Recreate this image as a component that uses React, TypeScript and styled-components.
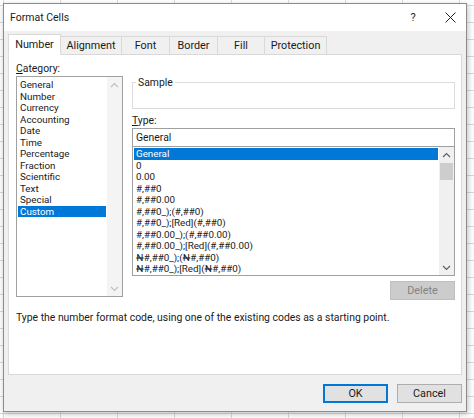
import styled, { createGlobalStyle } from 'styled-components';

const GlobalStyle = createGlobalStyle`
  html, body {
    margin: 0;
    padding: 0;
  }
  body {
    width: 474px;
    height: 418px;
    overflow: hidden;
    font-family: Roboto, "Noto Sans", sans-serif;
    font-size: 10.4px;
    color: #000;
    background-color: #fff;
    background-image:
      linear-gradient(to right, #dadada 1px, transparent 1px),
      linear-gradient(to bottom, #dadada 1px, transparent 1px);
    background-size: 57px 17px;
    background-position: 3px 5px;
  }
`;

const categories = [
  'General',
  'Number',
  'Currency',
  'Accounting',
  'Date',
  'Time',
  'Percentage',
  'Fraction',
  'Scientific',
  'Text',
  'Special',
  'Custom',
];

const formats = [
  'General',
  '0',
  '0.00',
  '#,##0',
  '#,##0.00',
  '#,##0_);(#,##0)',
  '#,##0_);[Red](#,##0)',
  '#,##0.00_);(#,##0.00)',
  '#,##0.00_);[Red](#,##0.00)',
  '\u20A6#,##0_);(\u20A6#,##0)',
  '\u20A6#,##0_);[Red](\u20A6#,##0)',
];

const tabs = ['Number', 'Alignment', 'Font', 'Border', 'Fill', 'Protection'];
const tabWidths = [53, 61, 48, 48, 47, 62];

function Chevron({ up }: { up?: boolean }) {
  return (
    <svg width="9" height="6" viewBox="0 0 9 6">
      <path
        d={up ? 'M1 5 L4.5 1.5 L8 5' : 'M1 1 L4.5 4.5 L8 1'}
        fill="none"
        stroke="currentColor"
        strokeWidth="1.2"
      />
    </svg>
  );
}

export default function App() {
  return (
    <>
      <GlobalStyle />
      <Page>
        <Dialog>
          <TitleBar>
            <Title>Format Cells</Title>
            <TitleButton $w={42}>?</TitleButton>
            <TitleButton $w={32}>
              <svg width="11" height="11" viewBox="0 0 11 11">
                <path d="M0.5 0.5 L10.5 10.5 M10.5 0.5 L0.5 10.5" stroke="#222" strokeWidth="1" />
              </svg>
            </TitleButton>
          </TitleBar>
          <Body>
            <TabRow>
              {tabs.map((t, i) => (
                <Tab key={t} $active={i === 0} $w={tabWidths[i]}>
                  {t}
                </Tab>
              ))}
            </TabRow>
            <Panel>
              <Columns>
                <Column>
                  <Label>
                    <u>C</u>ategory:
                  </Label>
                  <CategoryList>
                    <Items>
                      {categories.map((c) => (
                        <Item key={c} $selected={c === 'Custom'}>
                          {c}
                        </Item>
                      ))}
                    </Items>
                    <ScrollTrack $disabled>
                      <Arrow $disabled>
                        <Chevron up />
                      </Arrow>
                      <Gap />
                      <Arrow $disabled>
                        <Chevron />
                      </Arrow>
                    </ScrollTrack>
                  </CategoryList>
                </Column>
                <Column>
                  <SampleBox>
                    <legend>Sample</legend>
                  </SampleBox>
                  <Label $top={5}>
                    <u>T</u>ype:
                  </Label>
                  <TypeInput>General</TypeInput>
                  <FormatList>
                    <Items $pad={1}>
                      {formats.map((f) => (
                        <Item key={f} $selected={f === 'General'}>
                          {f}
                        </Item>
                      ))}
                    </Items>
                    <ScrollTrack>
                      <Arrow>
                        <Chevron up />
                      </Arrow>
                      <Thumb />
                      <Gap />
                      <Arrow>
                        <Chevron />
                      </Arrow>
                    </ScrollTrack>
                  </FormatList>
                  <DeleteRow>
                    <Button $disabled>Delete</Button>
                  </DeleteRow>
                </Column>
              </Columns>
              <Hint>Type the number format code, using one of the existing codes as a starting point.</Hint>
            </Panel>
            <Footer>
              <Button $primary>OK</Button>
              <Button>Cancel</Button>
            </Footer>
          </Body>
        </Dialog>
      </Page>
    </>
  );
}

const Page = styled.div`
  padding: 3px 0 0 3px;
`;

const Dialog = styled.div`
  width: 462px;
  height: 407px;
  border: 1px solid #8c8c8c;
  background: #f0f0f0;
  box-shadow: 1px 2px 6px rgba(0, 0, 0, 0.25);
  display: flex;
  flex-direction: column;
`;

const TitleBar = styled.div`
  height: 27px;
  background: #fff;
  display: flex;
  align-items: center;
  padding-left: 6px;
  flex-shrink: 0;
`;

const Title = styled.div`
  flex: 1;
  font-size: 10.5px;
  color: #222;
`;

const TitleButton = styled.div<{ $w: number }>`
  width: ${(p) => p.$w}px;
  height: 27px;
  display: flex;
  align-items: center;
  justify-content: center;
  font-size: 11px;
  color: #222;
`;

const Body = styled.div`
  flex: 1;
  padding: 4px 4px 0 4px;
  display: flex;
  flex-direction: column;
`;

const TabRow = styled.div`
  display: flex;
  align-items: flex-end;
  height: 20px;
  position: relative;
  z-index: 1;
  margin-bottom: -1px;
`;

const Tab = styled.div<{ $active?: boolean; $w: number }>`
  width: ${(p) => p.$w}px;
  box-sizing: border-box;
  height: ${(p) => (p.$active ? 21 : 19)}px;
  display: flex;
  align-items: center;
  justify-content: center;
  font-size: 10.8px;
  background: ${(p) => (p.$active ? '#fff' : '#f0f0f0')};
  border: 1px solid #d9d9d9;
  border-bottom: ${(p) => (p.$active ? '1px solid #fff' : '1px solid #d9d9d9')};
  border-left-width: ${(p) => (p.$active ? 1 : 0)}px;
  color: #1a1a1a;
  &:nth-child(2) {
    border-left-width: 0;
  }
`;

const Panel = styled.div`
  height: 321px;
  box-sizing: border-box;
  background: #fff;
  border: 1px solid #d9d9d9;
  padding: 7px 6px 0 7px;
`;

const Columns = styled.div`
  display: grid;
  grid-template-columns: 107px 1fr;
  column-gap: 9px;
  align-items: start;
`;

const Column = styled.div`
  display: flex;
  flex-direction: column;
`;

const Label = styled.div<{ $top?: number }>`
  height: 14px;
  line-height: 14px;
  margin-top: ${(p) => p.$top ?? 0}px;
  color: #1a1a1a;
`;

const CategoryList = styled.div`
  height: 221px;
  box-sizing: border-box;
  border: 1px solid #a0a0a0;
  display: flex;
`;

const FormatList = styled.div`
  height: 130px;
  box-sizing: border-box;
  border: 1px solid #a0a0a0;
  display: flex;
`;

const Items = styled.div<{ $pad?: number }>`
  flex: 1;
  padding: ${(p) => p.$pad ?? 2}px 1px 0 1px;
  overflow: hidden;
`;

const Item = styled.div<{ $selected?: boolean }>`
  height: 11.5px;
  line-height: 11.5px;
  font-size: 9.8px;
  padding-left: 2px;
  white-space: nowrap;
  background: ${(p) => (p.$selected ? '#0078d7' : 'transparent')};
  color: ${(p) => (p.$selected ? '#fff' : '#1a1a1a')};
`;

const ScrollTrack = styled.div<{ $disabled?: boolean }>`
  width: 15px;
  background: ${(p) => (p.$disabled ? '#f4f4f4' : '#f0f0f0')};
  display: flex;
  flex-direction: column;
`;

const Arrow = styled.div<{ $disabled?: boolean }>`
  height: 15px;
  display: flex;
  align-items: center;
  justify-content: center;
  color: ${(p) => (p.$disabled ? '#c0c0c0' : '#606060')};
`;

const Thumb = styled.div`
  height: 17px;
  margin: 1px 1px 0 1px;
  background: #cdcdcd;
`;

const Gap = styled.div`
  flex: 1;
`;

const SampleBox = styled.fieldset`
  margin: 14px 0 0 0;
  padding: 0;
  height: 33px;
  box-sizing: border-box;
  border: 1px solid #dcdcdc;
  legend {
    margin-left: 3px;
    padding: 0 2px;
    color: #1a1a1a;
    line-height: 13px;
  }
`;

const TypeInput = styled.div`
  height: 18px;
  box-sizing: border-box;
  border: 1px solid #a0a0a0;
  border-bottom: 0;
  padding-left: 3px;
  line-height: 17px;
  color: #1a1a1a;
`;

const DeleteRow = styled.div`
  display: flex;
  justify-content: flex-end;
  margin-top: 5px;
`;

const Button = styled.div<{ $primary?: boolean; $disabled?: boolean }>`
  width: 65px;
  height: 19px;
  box-sizing: border-box;
  display: flex;
  align-items: center;
  justify-content: center;
  font-size: 10.8px;
  border: ${(p) => (p.$primary ? '2px solid #0078d7' : '1px solid #adadad')};
  border-color: ${(p) => (p.$disabled ? '#bfbfbf' : undefined)};
  background: ${(p) => (p.$disabled ? '#cccccc' : '#e1e1e1')};
  color: ${(p) => (p.$disabled ? '#838383' : '#1a1a1a')};
`;

const Hint = styled.div`
  margin-top: 11px;
  color: #1a1a1a;
`;

const Footer = styled.div`
  display: flex;
  justify-content: flex-end;
  gap: 9px;
  padding: 9px 0 0 0;
`;
